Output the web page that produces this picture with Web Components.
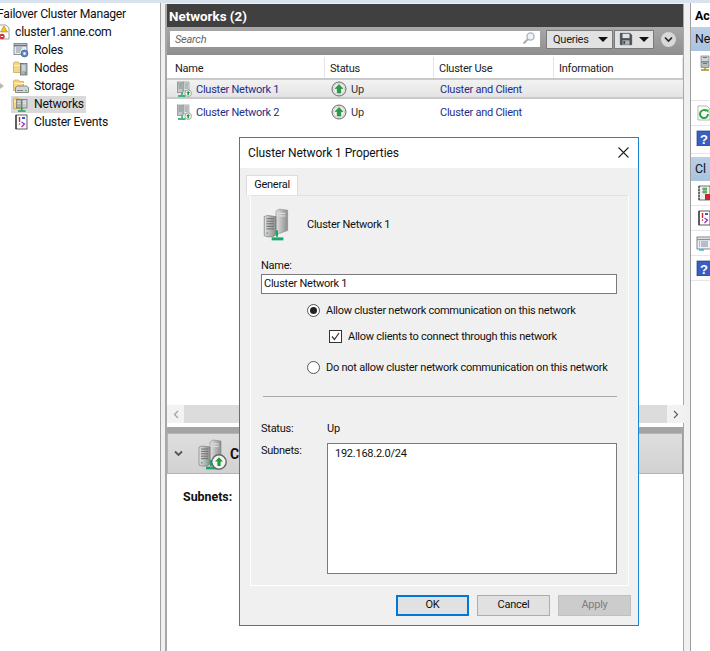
<!DOCTYPE html>
<html>
<head>
<meta charset="utf-8">
<title>Failover Cluster Manager</title>
<style>
  html, body { margin: 0; height: 100%; overflow: hidden; background: #f0f0f0; }
  body { font: 11px Roboto, "Liberation Sans", sans-serif; letter-spacing: -.25px; color: #111; }
</style>
</head>
<body>
<fc-app></fc-app>
<script>
const SERVER = `
  <defs><linearGradient id="sv" x1="0" x2="1" y1="0" y2="0"><stop offset="0" stop-color="#e2e2e2"/><stop offset="1" stop-color="#8c8c8c"/></linearGradient></defs>
  <path d="M7.5 2l1.5-1 4 .5V11l-4 1.5H7.5z" fill="url(#sv)" stroke="#8a8a8a" stroke-width=".3"/>
  <path d="M2 4.5l1.5-.5 4 .5V13l-1.5 1H3.5L2 13.5z" fill="url(#sv)" stroke="#6e6e6e" stroke-width=".3"/>
  <path d="M3 5.5h3.5M3 6.7h3.5M3 7.9h3.5M3 9.1h3.5M3 10.3h3.5" stroke="#5e5e5e" stroke-width=".4"/>
  <path d="M9 3h3M9 4.2h3" stroke="#eee" stroke-width=".4"/>
  <circle cx="3.4" cy="12.4" r=".5" fill="#39d060"/>
  <path d="M8 11v3" stroke="#19a868" stroke-width="1"/><path d="M5.5 15h5.5" stroke="#19a868" stroke-width="1.4"/>`;
const UP_BADGE = `
  <circle cx="12" cy="12" r="3.6" fill="#f4f4f4" stroke="#666" stroke-width=".7"/>
  <path d="M12 9.6l2 2.2h-1.2v2.2h-1.6v-2.2H10z" fill="#1e9c3c"/>`;
const FOLDER = `
  <path d="M.5 3l1-1h4l1 1.5h4v9h-10z" fill="#f4d683" stroke="#c0a050" stroke-width=".7"/>
  <path d="M1 5.5h10" stroke="#fdf2cc"/>`;
const HELP = `
  <rect x="1" y="1" width="14" height="15" fill="#3a5fc0" stroke="#23418f" stroke-width=".7"/>
  <text x="8" y="13.5" text-anchor="middle" font-family="Liberation Sans" font-weight="700" font-size="13" fill="#fff">?</text>`;
const NOTEBOOK = `
  <rect x="3" y="1" width="11" height="14" fill="#fff" stroke="#333" stroke-width=".8"/>
  <path d="M2 2h2M2 4h2M2 6h2M2 8h2M2 10h2M2 12h2M2 14h2" stroke="#111"/>`;

const ICONS = {
  cluster: `<path d="M2 1h7l3 3v11H2z" fill="#fff" stroke="#777" stroke-width=".7"/>
    <path d="M7 2l3.5 6h-7z" fill="#f2c811" stroke="#8a6d00" stroke-width=".5"/>
    <circle cx="5" cy="12.5" r="2.7" fill="#d23030"/><path d="M3.8 12.5h2.4" stroke="#fff"/>`,
  roles: `<rect x="1" y="1.5" width="13" height="11" fill="#e6ebf2" stroke="#6c7380" stroke-width=".8"/>
    <path d="M1 3.5h13" stroke="#6c7380" stroke-width="1.8"/><path d="M3 6h6M3 8h5M3 10h4" stroke="#8a93a0"/>
    <circle cx="11.5" cy="11.5" r="3.4" fill="#5f8fc8" stroke="#3a5f90" stroke-width=".8"/>
    <circle cx="11.5" cy="11.5" r="1.2" fill="#fff"/>`,
  nodes: FOLDER + `<rect x="7.5" y="3.5" width="6.5" height="11.5" fill="#a8b0b0" stroke="#5c6464" stroke-width=".7"/>
    <path d="M9 6h3.5M9 8h3.5M9 10h3.5" stroke="#eef"/><circle cx="12.5" cy="13" r=".9" fill="#2cc24a"/>`,
  storage: FOLDER + `<path d="M2.5 9.5l2-1.5h9l2 1.5v5h-13z" fill="#d4d4d4" stroke="#666" stroke-width=".7"/>
    <path d="M4 12.5h6" stroke="#888"/><circle cx="13" cy="12.5" r=".8" fill="#2cc24a"/>`,
  networks: FOLDER + `<rect x="3.5" y="3.5" width="5" height="8.5" fill="#a8b0b0" stroke="#5c6464" stroke-width=".6"/>
    <rect x="9" y="3.5" width="5" height="8.5" fill="#c6cccc" stroke="#5c6464" stroke-width=".6"/>
    <path d="M4.5 5.5h3M4.5 7.5h3M10 5.5h3M10 7.5h3" stroke="#eef" stroke-width=".7"/>
    <path d="M8.7 12v2M5 15h7.5" stroke="#16a060" stroke-width="1.5"/>`,
  events: NOTEBOOK + `<path d="M6.5 3v5" stroke="#d02020" stroke-width="1.4"/><circle cx="6.5" cy="10" r=".8" fill="#d02020"/>
    <path d="M9 3h3v2H9z" fill="#3060d0"/><path d="M8.5 8l3 2-3 3" fill="none" stroke="#a020c0" stroke-width="1.2"/>`,
  net: SERVER + UP_BADGE,
  netsmall: `<rect x="1.5" y="1" width="5.5" height="10.5" fill="#c2c8c8" stroke="#6e7676" stroke-width=".6"/>
    <rect x="7.5" y="1" width="5.5" height="9" fill="#dde0e0" stroke="#7e8686" stroke-width=".6"/>
    <path d="M2.5 3h3.5M2.5 5h3.5M2.5 7h3.5M8.5 3h3.5M8.5 5h3.5M8.5 7h3.5" stroke="#69727a" stroke-width=".7"/>
    <path d="M6 11.5v2.5" stroke="#14a860" stroke-width="1.4"/><path d="M2 15h7.5" stroke="#14a860" stroke-width="1.6"/>
    <circle cx="12.2" cy="12.2" r="3.3" fill="#f6f6f6" stroke="#777" stroke-width=".6"/>
    <path d="M12.2 9.9l2 2.2h-1.2v2.1h-1.6v-2.1h-1.2z" fill="#1e9c3c"/>`,
  server: SERVER,
  up: `<circle cx="8" cy="8" r="7" fill="#ececec" stroke="#6a6a6a"/>
    <circle cx="8" cy="8" r="5.4" fill="#f8f8f8" stroke="#b8b8b8" stroke-width=".6"/>
    <path d="M8 3.4l4 4.2H9.8v4.4H6.2V7.6H4z" fill="#23a03f" stroke="#14702a" stroke-width=".5"/>`,
  search: `<circle cx="9.5" cy="5.5" r="3.6" fill="#eef3f8" stroke="#a8b2bc" stroke-width="1.3"/>
    <path d="M6.8 8.2L2.5 12.5" stroke="#b4aea0" stroke-width="2"/>`,
  save: `<path d="M1.5 1.5h11l2 2v11h-13z" fill="#4a5258" stroke="#30353a" stroke-width=".7"/>
    <rect x="4" y="2" width="8" height="5" fill="#dfe3e6"/><rect x="4" y="9.5" width="8" height="5" fill="#aeb4b8"/>
    <rect x="5" y="10.5" width="2" height="3" fill="#3a4046"/>`,
  node: `<rect x="5" y="1" width="8" height="5.5" fill="#cfd6d6" stroke="#667" stroke-width=".6"/>
    <rect x="5" y="7" width="8" height="5.5" fill="#b4bcbc" stroke="#667" stroke-width=".6"/>
    <path d="M7 2.5h4M7 8.5h4" stroke="#5a8a5a"/><path d="M9 12.5v2M5 15h8" stroke="#b08a20" stroke-width="1.4"/>`,
  refresh: `<path d="M2 1h9l3 3v11H2z" fill="#fff" stroke="#999" stroke-width=".7"/>
    <path d="M12 9a4 4 0 1 1-1.4-3" fill="none" stroke="#2aa63c" stroke-width="2"/><path d="M9 4.5h3.5V8z" fill="#2aa63c"/>`,
  help: HELP,
  nbgreen: `<rect x="3" y="1" width="11" height="14" fill="#f0f0f0" stroke="#555" stroke-width=".8"/>
    <path d="M2 2h2M2 5h2M2 8h2M2 11h2M2 14h2" stroke="#222"/>
    <path d="M6 4h5M6 7h5M8 2.5v6M10 2.5v6" stroke="#2a9a3a"/><rect x="9" y="9" width="6" height="6" fill="#c82a2a"/>`,
  nbred: NOTEBOOK + `<path d="M6.5 3v5" stroke="#d02020" stroke-width="1.4"/><circle cx="6.5" cy="10" r=".8" fill="#d02020"/>
    <path d="M9 3h3v2H9z" fill="#3060d0"/><path d="M8.5 8l3 2-3 3" fill="none" stroke="#a020c0" stroke-width="1.2"/>`,
  view: `<rect x="1" y="2" width="14" height="12" fill="#eef1f5" stroke="#667" stroke-width=".8"/>
    <path d="M1 4.5h14" stroke="#8a93a0" stroke-width="1.4"/>
    <path d="M5 7h7M5 9h7M5 11h7" stroke="#7a8aa0"/><path d="M3 7h1M3 9h1M3 11h1" stroke="#2090d0"/>
    <path d="M3 15h5" stroke="#20b0e0" stroke-width="1.4"/>`
};

class FcIcon extends HTMLElement {
  connectedCallback() {
    const size = this.getAttribute('size') || 16;
    const root = this.attachShadow({ mode: 'open' });
    root.innerHTML = `
      <style>:host { display: inline-flex; flex: none; width: ${size}px; height: ${size}px; } svg { display: block; }</style>
      <svg width="${size}" height="${size}" viewBox="0 0 16 16">${ICONS[this.getAttribute('name')]}</svg>`;
  }
}

class TreeItem extends HTMLElement {
  connectedCallback() {
    const root = this.attachShadow({ mode: 'open' });
    const selected = this.hasAttribute('selected');
    root.innerHTML = `
      <style>
        :host { display: flex; align-items: center; height: 18px; padding-left: 13px; position: relative; white-space: nowrap; }
        :host([top]) { padding-left: 0; }
        .in { display: flex; align-items: center; gap: 5px; height: 17px; margin-left: -2px; padding: 0 2px; ${selected ? 'background: #d9d9d9;' : ''} }
        :host([top]) .in { margin-left: -5px; gap: 2px; }
        .arrow { position: absolute; left: 0; top: 6px; border-left: 4px solid #b8b8b8; border-top: 3.5px solid transparent; border-bottom: 3.5px solid transparent; }
      </style>
      ${this.hasAttribute('arrow') ? '<span class="arrow"></span>' : ''}
      <div class="in"><fc-icon name="${this.getAttribute('icon')}"></fc-icon><slot></slot></div>`;
  }
}

class TreePane extends HTMLElement {
  constructor() {
    super();
    this.attachShadow({ mode: 'open' }).innerHTML = `
      <style>
        :host { display: block; width: 160px; flex: none; background: #fff; border-right: 1px solid #a0a0a0; overflow: hidden; padding-top: 2px; font-size: 12.2px; }
        .root { height: 18px; line-height: 18px; margin-left: -3px; white-space: nowrap; }
      </style>
      <div class="root">Failover Cluster Manager</div>
      <tree-item icon="cluster" top>cluster1.anne.com</tree-item>
      <tree-item icon="roles">Roles</tree-item>
      <tree-item icon="nodes">Nodes</tree-item>
      <tree-item icon="storage" arrow>Storage</tree-item>
      <tree-item icon="networks" selected>Networks</tree-item>
      <tree-item icon="events">Cluster Events</tree-item>`;
  }
}

class NetRow extends HTMLElement {
  connectedCallback() {
    const root = this.attachShadow({ mode: 'open' });
    root.innerHTML = `
      <style>
        :host { display: grid; grid-template-columns: 158px 109px 1fr; height: 21px; align-items: center; box-sizing: border-box; margin-bottom: 2px; color: #1d2f8c; white-space: nowrap; }
        :host([selected]) { background: linear-gradient(#f2f2f2, #e4e4e4); border-top: 2px solid #c9c9c9; border-bottom: 2px solid #c9c9c9; }
        .name, .status { display: flex; align-items: center; gap: 4px; padding-top: 1px; }
        .name { padding-left: 9px; }
        .status { color: #333; padding-left: 6px; }
        .use { padding: 1px 0 0 6px; }
      </style>
      <div class="name"><fc-icon name="netsmall"></fc-icon>${this.getAttribute('label')}</div>
      <div class="status"><fc-icon name="up"></fc-icon>Up</div>
      <div class="use">Cluster and Client</div>`;
  }
}

class NetworkList extends HTMLElement {
  constructor() {
    super();
    this.attachShadow({ mode: 'open' }).innerHTML = `
      <style>
        :host { display: flex; flex-direction: column; height: 366px; flex: none; margin-top: 2px; background: #fff; }
        .cols { display: grid; grid-template-columns: 158px 109px 120px 1fr; height: 21px; flex: none; color: #222; }
        .cols div { padding-left: 8px; line-height: 23px; border-right: 1px solid #e4e4e4; }
        .cols div + div { padding-left: 5px; }
        .body { flex: 1; }
        .bar { display: flex; justify-content: space-between; align-items: center; height: 18px; background: #dcdcdc; flex: none; margin-right: -1px; }
        .bar span { display: flex; width: 17px; height: 18px; background: #f2f2f2; align-items: center; justify-content: center; }
        svg { display: block; }
      </style>
      <div class="cols"><div>Name</div><div>Status</div><div>Cluster Use</div><div>Information</div></div>
      <div class="body">
        <net-row label="Cluster Network 1" selected></net-row>
        <net-row label="Cluster Network 2"></net-row>
      </div>
      <div class="bar">
        <span><svg width="6" height="9"><path d="M5 1L1.5 4.5 5 8" fill="none" stroke="#a0a0a0" stroke-width="1.2"/></svg></span>
        <span><svg width="6" height="9"><path d="M1 1l3.5 3.5L1 8" fill="none" stroke="#606060" stroke-width="1.2"/></svg></span>
      </div>`;
  }
}

class ToolBar extends HTMLElement {
  constructor() {
    super();
    this.attachShadow({ mode: 'open' }).innerHTML = `
      <style>
        :host { display: flex; align-items: center; height: 28px; flex: none; padding: 0 7px 0 3px; box-sizing: border-box; background: linear-gradient(#a8a8a8, #8e8e8e); }
        .search { flex: 1; display: flex; align-items: center; justify-content: space-between; height: 16px; background: #fff; padding: 0 3px 0 5px; margin-right: 6px; margin-top: -4px; }
        .search i { color: #666; }
        .btn { display: flex; align-items: center; justify-content: space-between; height: 19px; box-sizing: border-box; background: #e2e2e2; border: 1px solid #7a7a7a; padding: 0 4px 0 6px; margin-top: -4px; color: #222; }
        .q { width: 67px; margin-right: 1px; }
        .s { width: 40px; margin-right: 7px; padding-left: 4px; }
        .tri { border-top: 5px solid #111; border-left: 5px solid transparent; border-right: 5px solid transparent; }
        .more { display: flex; align-items: center; justify-content: center; width: 15px; height: 15px; border-radius: 50%; background: #d8d8d8; margin-top: -4px; }
      </style>
      <div class="search"><i>Search</i><fc-icon name="search"></fc-icon></div>
      <div class="btn q">Queries<span class="tri"></span></div>
      <div class="btn s"><fc-icon name="save" size="14"></fc-icon><span class="tri"></span></div>
      <div class="more"><svg width="9" height="7"><path d="M1 1.5l3.5 3.5L8 1.5" fill="none" stroke="#222" stroke-width="1.6"/></svg></div>`;
  }
}

class DetailPane extends HTMLElement {
  constructor() {
    super();
    this.attachShadow({ mode: 'open' }).innerHTML = `
      <style>
        :host { display: flex; flex-direction: column; flex: 1; background: #fff; border-top: 6px solid #a4a4a4; margin-top: 4px; }
        .head { display: flex; align-items: center; height: 41px; flex: none; box-sizing: border-box; padding-left: 6px; background: linear-gradient(#dedede, #d2d2d2); border: 1px solid #b4b4b4; border-right-color: #999; }
        .head svg { margin-right: 12px; }
        .title { margin-left: 3px; font-weight: 700; font-size: 14px; letter-spacing: 0; white-space: nowrap; }
        .sub { margin: 15px 0 0 16px; font-weight: 700; font-size: 12.4px; letter-spacing: 0; line-height: 16px; }
      </style>
      <div class="head">
        <svg width="9" height="7"><path d="M1 1.5l3.5 3.5L8 1.5" fill="none" stroke="#555" stroke-width="1.8"/></svg>
        <fc-icon name="net" size="32"></fc-icon>
        <span class="title">Cl</span>
      </div>
      <div class="sub">Subnets:</div>`;
  }
}

class CenterPane extends HTMLElement {
  constructor() {
    super();
    this.attachShadow({ mode: 'open' }).innerHTML = `
      <style>
        :host { display: flex; flex-direction: column; width: 516px; flex: none; margin-left: 4px; margin-top: 1px; border-left: 2px solid #a8a8a8; border-right: 1px solid #a8a8a8; background: #fff; }
        .title { height: 23px; line-height: 25px; flex: none; padding-left: 2px; background: #404040; color: #fff; font-weight: 700; font-size: 13.4px; letter-spacing: 0; }
      </style>
      <div class="title">Networks (2)</div>
      <tool-bar></tool-bar>
      <network-list></network-list>
      <detail-pane></detail-pane>`;
  }
}

class ActionItem extends HTMLElement {
  connectedCallback() {
    const tall = this.getAttribute('h') || 25;
    this.attachShadow({ mode: 'open' }).innerHTML = `
      <style>
        :host { display: block; height: ${tall}px; box-sizing: border-box; padding: 4px 0 0 5px; border-bottom: 1px solid #e6e6e6; }
      </style>
      <fc-icon name="${this.getAttribute('icon')}"></fc-icon>`;
  }
}

class ActionsPane extends HTMLElement {
  constructor() {
    super();
    this.attachShadow({ mode: 'open' }).innerHTML = `
      <style>
        :host { display: block; flex: 1; margin-left: 6px; border-left: 1px solid #a0a0a0; background: #fff; overflow: hidden; white-space: nowrap; letter-spacing: 0; }
        .top { height: 24px; line-height: 26px; padding-left: 4px; font-weight: 700; font-size: 12.4px; color: #000; }
        .band { height: 24px; line-height: 24px; padding-left: 4px; font-size: 12.4px; background: linear-gradient(#bcd0e6, #a9c3de); color: #111; }
        .band.c { margin-top: 3px; }
      </style>
      <div class="top">Ac</div>
      <div class="band">Ne</div>
      <action-item icon="node" h="50"></action-item>
      <action-item icon="refresh"></action-item>
      <action-item icon="help" h="28"></action-item>
      <div class="band c">Cl</div>
      <action-item icon="nbgreen"></action-item>
      <action-item icon="nbred"></action-item>
      <action-item icon="view"></action-item>
      <action-item icon="help"></action-item>`;
  }
}

class PropDialog extends HTMLElement {
  constructor() {
    super();
    this.attachShadow({ mode: 'open' }).innerHTML = `
      <style>
        :host { display: flex; flex-direction: column; position: absolute; left: 239px; top: 137px; width: 400px; height: 489px; box-sizing: border-box; border: 1px solid #1a85d6; background: #f0f0f0; color: #111; white-space: nowrap; }
        .title { display: flex; align-items: center; justify-content: space-between; height: 30px; flex: none; box-sizing: border-box; padding: 0 9px 1px 8px; background: #fff; font-size: 12px; letter-spacing: -.1px; }
        .tabs { padding: 7px 0 0 6px; height: 20px; flex: none; }
        .tab { display: inline-block; width: 52px; height: 20px; line-height: 18px; text-align: center; background: #fff; border: 1px solid #dcdcdc; border-bottom: 0; box-sizing: border-box; }
        .page { position: relative; margin: 0 9px 0 10px; height: 391px; box-sizing: border-box; border: 1px solid #e2e2e2; border-left-color: #fff; border-right-color: #fff; border-bottom-color: #fff; background: #f0f0f0; padding: 11px 11px 0 10px; display: flex; flex-direction: column; }
        .hd { display: flex; align-items: center; gap: 13px; height: 34px; }
        .hd fc-icon { margin-left: -1px; }
        .name { margin-top: 18px; line-height: 14px; }
        .field { height: 20px; box-sizing: border-box; border: 1px solid #7a7a7a; background: #fff; padding-left: 2px; line-height: 18px; margin-top: 1px; }
        .opts { padding-left: 46px; display: flex; flex-direction: column; margin-top: 9px; }
        .opt { display: flex; align-items: center; gap: 6px; height: 14px; }
        .radio { width: 13px; height: 13px; border: 1px solid #555; border-radius: 50%; background: #fff; box-sizing: border-box; display: flex; align-items: center; justify-content: center; flex: none; }
        .radio b { width: 7px; height: 7px; border-radius: 50%; background: #222; }
        .check { width: 13px; height: 13px; border: 1px solid #333; background: #fff; box-sizing: border-box; flex: none; }
        .check svg { display: block; }
        .sub { margin: 12px 0 0 22px; }
        .sub + .opt { margin-top: 17px; }
        hr { border: 0; border-top: 1px solid #a8a8a8; margin: 22px 0 0 2px; width: 354px; height: 0; }
        .info { display: grid; grid-template-columns: 66px 290px; margin-top: 25px; }
        .info .l2 { margin-top: 9px; }
        .box { height: 131px; box-sizing: border-box; border: 1px solid #7a7a7a; background: #fff; padding: 3px 7px; margin-top: 8px; }
        .btns { display: flex; justify-content: flex-end; gap: 8px; padding: 9px 7px 0 0; }
        .btn { width: 73px; height: 21px; box-sizing: border-box; line-height: 18px; text-align: center; border: 1px solid #adadad; background: #e1e1e1; }
        .ok { border: 2px solid #0078d7; line-height: 16px; }
        .off { background: #ccc; color: #7f7f7f; border-color: #bfbfbf; }
      </style>
      <div class="title">Cluster Network 1 Properties
        <svg width="11" height="11"><path d="M.5.5l10 10M10.5.5l-10 10" stroke="#222" stroke-width="1.1"/></svg>
      </div>
      <div class="tabs"><span class="tab">General</span></div>
      <div class="page">
        <div class="hd"><fc-icon name="server" size="34"></fc-icon><span>Cluster Network 1</span></div>
        <div class="name">Name:</div>
        <div class="field">Cluster Network 1</div>
        <div class="opts">
          <div class="opt"><span class="radio"><b></b></span>Allow cluster network communication on this network</div>
          <div class="opt sub"><span class="check"><svg width="11" height="11"><path d="M2 5.5l2.5 3L9 2" fill="none" stroke="#333" stroke-width="1.2"/></svg></span>Allow clients to connect through this network</div>
          <div class="opt"><span class="radio"></span>Do not allow cluster network communication on this network</div>
        </div>
        <hr>
        <div class="info">
          <div>Status:</div><div>Up</div>
          <div class="l2">Subnets:</div><div class="box">192.168.2.0/24</div>
        </div>
      </div>
      <div class="btns">
        <div class="btn ok">OK</div><div class="btn">Cancel</div><div class="btn off">Apply</div>
      </div>`;
  }
}

class FcApp extends HTMLElement {
  constructor() {
    super();
    this.attachShadow({ mode: 'open' }).innerHTML = `
      <style>
        :host { display: flex; flex-direction: column; height: 651px; width: 710px; overflow: hidden; position: relative; background: #f0f0f0; }
        .strip { height: 3px; flex: none; background: #d8e3ee; }
        .main { display: flex; flex: 1; min-height: 0; }
      </style>
      <div class="strip"></div>
      <div class="main"><tree-pane></tree-pane><center-pane></center-pane><actions-pane></actions-pane></div>
      <prop-dialog></prop-dialog>`;
  }
}

customElements.define('fc-icon', FcIcon);
customElements.define('tree-item', TreeItem);
customElements.define('tree-pane', TreePane);
customElements.define('net-row', NetRow);
customElements.define('network-list', NetworkList);
customElements.define('tool-bar', ToolBar);
customElements.define('detail-pane', DetailPane);
customElements.define('center-pane', CenterPane);
customElements.define('action-item', ActionItem);
customElements.define('actions-pane', ActionsPane);
customElements.define('prop-dialog', PropDialog);
customElements.define('fc-app', FcApp);
</script>
</body>
</html>
